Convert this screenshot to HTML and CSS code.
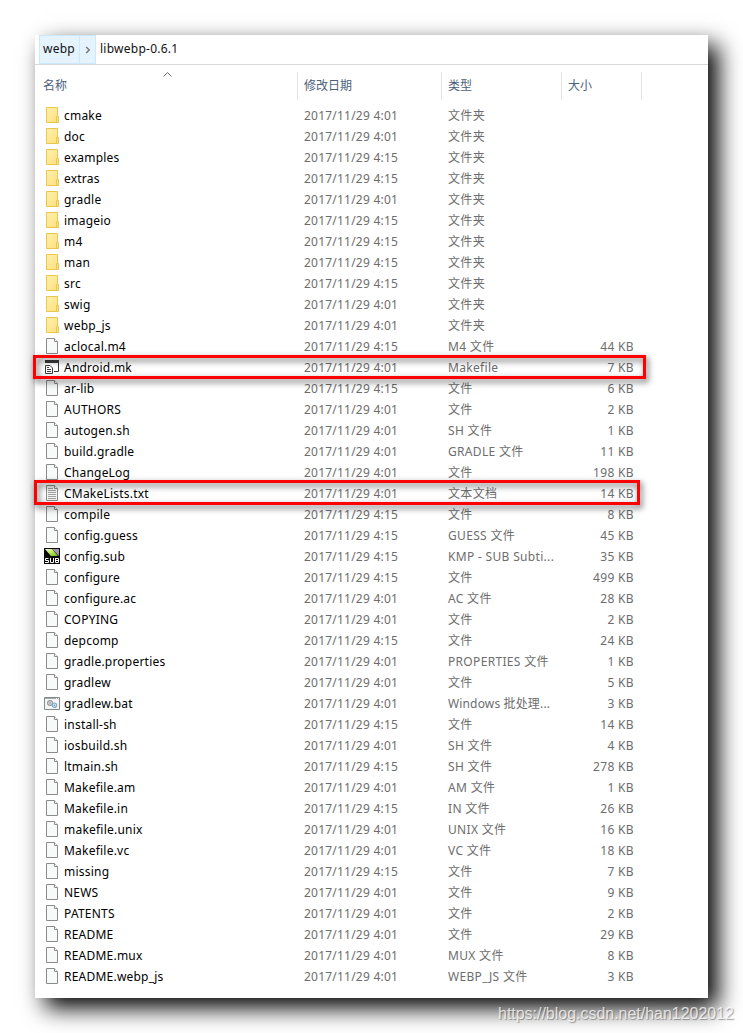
FILE: index.html
```html
<!DOCTYPE html>
<html lang="zh-CN">
<head>
<meta charset="utf-8">
<title>libwebp-0.6.1</title>
<link rel="stylesheet" href="styles.css">
</head>
<body>
<svg class="defs" aria-hidden="true">
  <defs>
    <linearGradient id="gold" x1="0" y1="0" x2="1" y2="1"><stop offset="0" stop-color="#ffefb0"/><stop offset="1" stop-color="#ffe07c"/></linearGradient>
    <linearGradient id="lime" x1="0" y1="0" x2="1" y2="1"><stop offset="0" stop-color="#f4fbd8"/><stop offset=".45" stop-color="#c3ea62"/><stop offset="1" stop-color="#6fb512"/></linearGradient>
    <symbol id="dir" viewBox="0 0 16 16">
      <path d="M2.5.5h11v9h1v6h-12z" fill="url(#gold)" stroke="#eac748"/>
      <path d="M12.5 15v-5.5h1" fill="none" stroke="#eac748"/>
    </symbol>
    <symbol id="doc" viewBox="0 0 16 16">
      <path d="M2.5.5h8l3 3v12h-11z" fill="#f8f9f9" stroke="#8b8b8b"/>
      <path d="M10.5.5v3h3" fill="#fff" stroke="#8b8b8b"/>
    </symbol>
    <symbol id="txt" viewBox="0 0 16 16">
      <path d="M2.5.5h8l3 3v12h-11z" fill="#f4f4f4" stroke="#8b8b8b"/>
      <path d="M10.5.5v3h3" fill="#fff" stroke="#8b8b8b"/>
      <path d="M4 3.5h5M4 5.5h8M4 7.5h8M4 9.5h8M4 11.5h8M4 13.5h8" stroke="#a0a0a0"/>
    </symbol>
    <symbol id="mk" viewBox="0 0 16 16">
      <path d="M1 1h14v3H1z" fill="#3b3b3f"/>
      <path d="M14.5 3v9.5H10" fill="none" stroke="#3b3b3f"/>
      <path d="M1.5 6.5H6l2.5 2.5v5.5h-7z" fill="#fff" stroke="#3b3b3f"/>
      <path d="M3 8.5h2M3 10.5h4M3 12.5h4" stroke="#3b3b3f"/>
    </symbol>
    <symbol id="sub" viewBox="0 0 16 16">
      <path d="M0 0h16v16H0z" fill="#080808"/>
      <path d="M1 1h7l6 7H7z" fill="url(#lime)"/>
      <path d="M8 1h7v7z" fill="#9d94ad"/>
      <path d="M4.5 10.5h-3v2h3v2H1M6.5 10v4.5h3V10M11.5 10v4.5h3v-4h-3m0 2h3" fill="none" stroke="#fff"/>
    </symbol>
    <symbol id="bat" viewBox="0 0 16 16">
      <path d="M.5 2.5h15v12H.5z" fill="#f4f6f7" stroke="#85898c"/>
      <path d="M1 3.5h14" stroke="#a5a9ac"/>
      <path d="M12 3.5h1M14 3.5h1" stroke="#fff"/>
      <circle cx="6" cy="8" r="2.4" fill="#e8eaeb" stroke="#92989c" stroke-width="1.2"/>
      <circle cx="10.4" cy="10.2" r="2.2" fill="#d9eef8" stroke="#7fabc4" stroke-width="1.2"/>
      <circle cx="6" cy="8" r=".8" fill="#777"/><circle cx="10.4" cy="10.2" r=".8" fill="#5995b5"/>
    </symbol>
  </defs>
</svg>
<main class="window">
  <nav class="crumbs">
    <span class="crumb">webp</span><span class="chevron"><svg width="6" height="8" viewBox="0 0 6 8"><path d="M1.2 1l3 3-3 3" fill="none" stroke="#777" stroke-width="1.5"/></svg></span><span class="current">libwebp-0.6.1</span>
  </nav>
  <header class="head">
    <span>名称<svg class="sort" width="9" height="5" viewBox="0 0 9 5"><path d="M.6 4.4l3.9-3.8 3.9 3.8" fill="none" stroke="#666"/></svg></span><span>修改日期</span><span>类型</span><span>大小</span>
  </header>
  <ul class="list">
    <li><svg><use href="#dir"/></svg><b>cmake</b><time>2017/11/29 4:01</time><i>文件夹</i><em></em></li>
    <li><svg><use href="#dir"/></svg><b>doc</b><time>2017/11/29 4:01</time><i>文件夹</i><em></em></li>
    <li><svg><use href="#dir"/></svg><b>examples</b><time>2017/11/29 4:15</time><i>文件夹</i><em></em></li>
    <li><svg><use href="#dir"/></svg><b>extras</b><time>2017/11/29 4:15</time><i>文件夹</i><em></em></li>
    <li><svg><use href="#dir"/></svg><b>gradle</b><time>2017/11/29 4:01</time><i>文件夹</i><em></em></li>
    <li><svg><use href="#dir"/></svg><b>imageio</b><time>2017/11/29 4:15</time><i>文件夹</i><em></em></li>
    <li><svg><use href="#dir"/></svg><b>m4</b><time>2017/11/29 4:15</time><i>文件夹</i><em></em></li>
    <li><svg><use href="#dir"/></svg><b>man</b><time>2017/11/29 4:15</time><i>文件夹</i><em></em></li>
    <li><svg><use href="#dir"/></svg><b>src</b><time>2017/11/29 4:15</time><i>文件夹</i><em></em></li>
    <li><svg><use href="#dir"/></svg><b>swig</b><time>2017/11/29 4:01</time><i>文件夹</i><em></em></li>
    <li><svg><use href="#dir"/></svg><b>webp_js</b><time>2017/11/29 4:01</time><i>文件夹</i><em></em></li>
    <li><svg><use href="#doc"/></svg><b>aclocal.m4</b><time>2017/11/29 4:15</time><i>M4 文件</i><em>44 KB</em></li>
    <li><svg><use href="#mk"/></svg><b>Android.mk</b><time>2017/11/29 4:01</time><i>Makefile</i><em>7 KB</em></li>
    <li><svg><use href="#doc"/></svg><b>ar-lib</b><time>2017/11/29 4:15</time><i>文件</i><em>6 KB</em></li>
    <li><svg><use href="#doc"/></svg><b>AUTHORS</b><time>2017/11/29 4:01</time><i>文件</i><em>2 KB</em></li>
    <li><svg><use href="#doc"/></svg><b>autogen.sh</b><time>2017/11/29 4:01</time><i>SH 文件</i><em>1 KB</em></li>
    <li><svg><use href="#doc"/></svg><b>build.gradle</b><time>2017/11/29 4:01</time><i>GRADLE 文件</i><em>11 KB</em></li>
    <li><svg><use href="#doc"/></svg><b>ChangeLog</b><time>2017/11/29 4:01</time><i>文件</i><em>198 KB</em></li>
    <li><svg><use href="#txt"/></svg><b>CMakeLists.txt</b><time>2017/11/29 4:01</time><i>文本文档</i><em>14 KB</em></li>
    <li><svg><use href="#doc"/></svg><b>compile</b><time>2017/11/29 4:15</time><i>文件</i><em>8 KB</em></li>
    <li><svg><use href="#doc"/></svg><b>config.guess</b><time>2017/11/29 4:15</time><i>GUESS 文件</i><em>45 KB</em></li>
    <li><svg><use href="#sub"/></svg><b>config.sub</b><time>2017/11/29 4:15</time><i>KMP - SUB Subti...</i><em>35 KB</em></li>
    <li><svg><use href="#doc"/></svg><b>configure</b><time>2017/11/29 4:15</time><i>文件</i><em>499 KB</em></li>
    <li><svg><use href="#doc"/></svg><b>configure.ac</b><time>2017/11/29 4:01</time><i>AC 文件</i><em>28 KB</em></li>
    <li><svg><use href="#doc"/></svg><b>COPYING</b><time>2017/11/29 4:01</time><i>文件</i><em>2 KB</em></li>
    <li><svg><use href="#doc"/></svg><b>depcomp</b><time>2017/11/29 4:15</time><i>文件</i><em>24 KB</em></li>
    <li><svg><use href="#doc"/></svg><b>gradle.properties</b><time>2017/11/29 4:01</time><i>PROPERTIES 文件</i><em>1 KB</em></li>
    <li><svg><use href="#doc"/></svg><b>gradlew</b><time>2017/11/29 4:01</time><i>文件</i><em>5 KB</em></li>
    <li><svg><use href="#bat"/></svg><b>gradlew.bat</b><time>2017/11/29 4:01</time><i class="tight">Windows 批处理...</i><em>3 KB</em></li>
    <li><svg><use href="#doc"/></svg><b>install-sh</b><time>2017/11/29 4:15</time><i>文件</i><em>14 KB</em></li>
    <li><svg><use href="#doc"/></svg><b>iosbuild.sh</b><time>2017/11/29 4:01</time><i>SH 文件</i><em>4 KB</em></li>
    <li><svg><use href="#doc"/></svg><b>ltmain.sh</b><time>2017/11/29 4:15</time><i>SH 文件</i><em>278 KB</em></li>
    <li><svg><use href="#doc"/></svg><b>Makefile.am</b><time>2017/11/29 4:01</time><i>AM 文件</i><em>1 KB</em></li>
    <li><svg><use href="#doc"/></svg><b>Makefile.in</b><time>2017/11/29 4:15</time><i>IN 文件</i><em>26 KB</em></li>
    <li><svg><use href="#doc"/></svg><b>makefile.unix</b><time>2017/11/29 4:01</time><i>UNIX 文件</i><em>16 KB</em></li>
    <li><svg><use href="#doc"/></svg><b>Makefile.vc</b><time>2017/11/29 4:01</time><i>VC 文件</i><em>18 KB</em></li>
    <li><svg><use href="#doc"/></svg><b>missing</b><time>2017/11/29 4:15</time><i>文件</i><em>7 KB</em></li>
    <li><svg><use href="#doc"/></svg><b>NEWS</b><time>2017/11/29 4:01</time><i>文件</i><em>9 KB</em></li>
    <li><svg><use href="#doc"/></svg><b>PATENTS</b><time>2017/11/29 4:01</time><i>文件</i><em>2 KB</em></li>
    <li><svg><use href="#doc"/></svg><b>README</b><time>2017/11/29 4:01</time><i>文件</i><em>29 KB</em></li>
    <li><svg><use href="#doc"/></svg><b>README.mux</b><time>2017/11/29 4:01</time><i>MUX 文件</i><em>8 KB</em></li>
    <li><svg><use href="#doc"/></svg><b>README.webp_js</b><time>2017/11/29 4:01</time><i>WEBP_JS 文件</i><em>3 KB</em></li>
  </ul>
  <div class="mark mark-android"></div>
  <div class="mark mark-cmake"></div>
</main>
<div class="watermark">https://blog.csdn.net/han1202012</div>
</body>
</html>
```
FILE: styles.css
```css
* { box-sizing: border-box; }
body {
  position: relative;
  height: 1033px;
  margin: 0;
  padding: 35px;
  overflow: hidden;
  background: #fff;
  font: 12px/21px "Noto Sans", "Noto Sans CJK SC", sans-serif;
}
.defs { position: absolute; width: 0; height: 0; }
.window {
  position: relative;
  width: 673px;
  height: 963px;
  background: #fff;
  box-shadow: 10px 10px 22px #000;
}
.crumbs {
  display: flex;
  height: 30px;
  padding-left: 4px;
  border-bottom: 1px solid #d9d9d9;
  line-height: 25px;
  letter-spacing: .25px;
  color: #111;
}
.crumb, .chevron {
  height: 29px;
  background: #e5f3ff;
  border: 1px solid #cce8ff;
}
.crumb { width: 41px; padding-left: 3px; }
.chevron { display: flex; align-items: center; justify-content: center; width: 17px; margin-left: -1px; }
.current { padding: 1px 0 0 4px; }
.head {
  display: grid;
  grid-template-columns: 255px 144px 120px 80px;
  height: 27px;
  margin: 7px 0 0 8px;
  line-height: 28px;
  color: #4c607a;
}
.head span { position: relative; border-right: 1px solid #e2e2e2; }
.head span + span { padding-left: 6px; }
.sort { position: absolute; left: 120px; top: 0; }
.list { margin: 6px 0 0; padding: 0; list-style: none; }
.list li {
  display: grid;
  grid-template-columns: 20px 240px 144px 110px 76px;
  align-items: center;
  height: 21px;
  padding-left: 9px;
  color: #6d6d6d;
  white-space: nowrap;
}
.list svg { width: 16px; height: 16px; margin-bottom: 1px; }
.list b { font-weight: 400; color: #000; letter-spacing: .22px; }
.list time { letter-spacing: .22px; }
.list i { font-style: normal; letter-spacing: .32px; }
.list .tight { letter-spacing: .15px; }
.list em { font-style: normal; text-align: right; letter-spacing: .35px; }
.mark {
  position: absolute;
  border: 3px solid #f00;
  filter: drop-shadow(2px 3px 3px rgba(0, 0, 0, .65));
}
.mark-android { left: -2px; top: 320px; width: 613px; height: 24px; }
.mark-cmake { left: -1px; top: 445px; width: 606px; height: 25px; }
.watermark {
  position: absolute;
  left: 498px;
  top: 1004px;
  font: 16px/20px "Liberation Sans", sans-serif;
  letter-spacing: -.02px;
  color: rgba(255, 255, 255, .75);
  text-shadow: 1px 1px 1px rgba(0, 0, 0, .35);
  white-space: nowrap;
}
```
